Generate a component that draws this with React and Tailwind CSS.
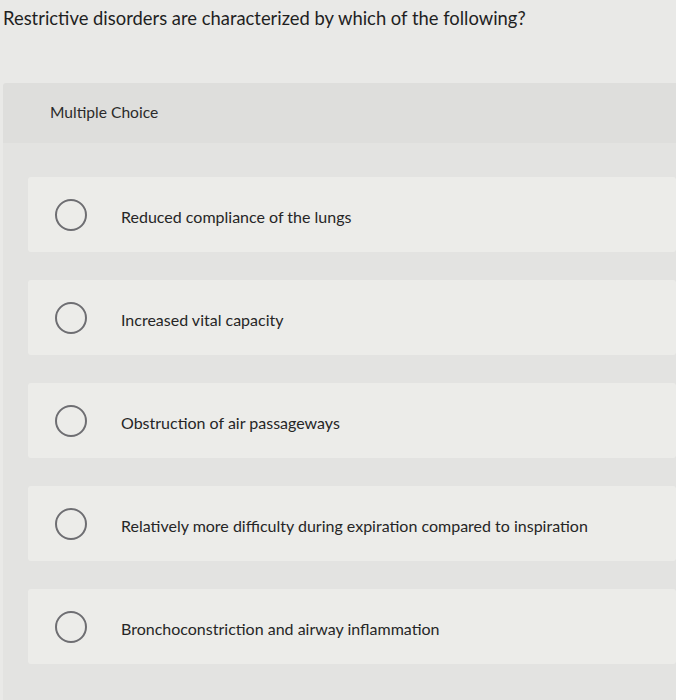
import React from "react";

const options = [
  "Reduced compliance of the lungs",
  "Increased vital capacity",
  "Obstruction of air passageways",
  "Relatively more difficulty during expiration compared to inspiration",
  "Bronchoconstriction and airway inflammation",
];

const Option = ({ label }) => (
  <div className="h-[75px] flex items-center pl-[27px] bg-[#ecece9] rounded-[3px]">
    <span className="w-[32px] h-[32px] rounded-full border-2 border-[#6e6e72] shrink-0"></span>
    <span className="ml-[34px] mt-[4px] text-[16px] text-[#262626]">{label}</span>
  </div>
);

export default function App() {
  return (
    <div
      className="w-[676px] h-[700px] overflow-hidden bg-[#e9e9e7]"
      style={{ fontFamily: "Lato, 'Liberation Sans', sans-serif" }}
    >
      {/* Question */}
      <h1 className="pl-[3px] pt-[7px] text-[18.4px] leading-[22px] text-[#1f1f1f] font-normal">
        Restrictive disorders are characterized by which of the following?
      </h1>

      {/* Answer panel */}
      <div className="mt-[54px] ml-[3px] rounded-tl-[3px] overflow-hidden">
        <div className="h-[60px] flex items-center pl-[47px] bg-[#dededc] text-[15.6px] text-[#2b2b2b]">
          Multiple Choice
        </div>
        <div className="bg-[#e3e3e1] pt-[34px] pl-[25px] pb-[40px] flex flex-col gap-[28px]">
          {options.map((o) => (
            <Option key={o} label={o} />
          ))}
        </div>
      </div>
    </div>
  );
}
